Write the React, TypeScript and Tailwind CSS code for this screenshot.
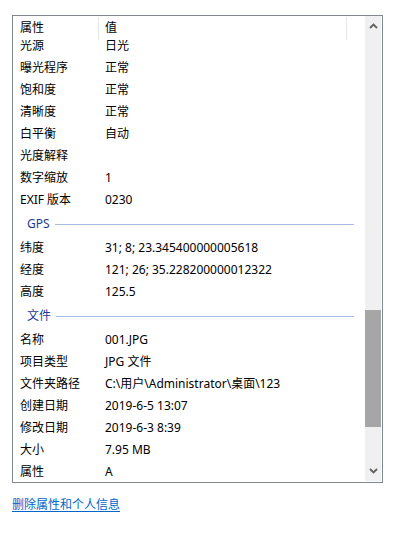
const font = { fontFamily: '"Noto Sans", "Noto Sans CJK SC", sans-serif' }

type Row = { k: string; v?: string } | { group: string }

const rows: Row[] = [
  { k: '光源', v: '日光' },
  { k: '曝光程序', v: '正常' },
  { k: '饱和度', v: '正常' },
  { k: '清晰度', v: '正常' },
  { k: '白平衡', v: '自动' },
  { k: '光度解释', v: '' },
  { k: '数字缩放', v: '1' },
  { k: 'EXIF 版本', v: '0230' },
  { group: 'GPS' },
  { k: '纬度', v: '31; 8; 23.345400000005618' },
  { k: '经度', v: '121; 26; 35.228200000012322' },
  { k: '高度', v: '125.5' },
  { group: '文件' },
  { k: '名称', v: '001.JPG' },
  { k: '项目类型', v: 'JPG 文件' },
  { k: '文件夹路径', v: 'C:\\用户\\Administrator\\桌面\\123' },
  { k: '创建日期', v: '2019-6-5 13:07' },
  { k: '修改日期', v: '2019-6-3 8:39' },
  { k: '大小', v: '7.95 MB' },
  { k: '属性', v: 'A' },
]

function Chevron({ down }: { down?: boolean }) {
  return (
    <svg width="9" height="6" viewBox="0 0 9 6" className={down ? 'rotate-180' : ''}>
      <path d="M1 5 L4.5 1.5 L8 5" fill="none" stroke="#606060" strokeWidth="1.8" />
    </svg>
  )
}

export default function App() {
  return (
    <div className="w-[397px] h-[533px] bg-white pt-[15px] pl-[12px] text-[12px] text-black" style={font}>
      <div className="w-[371px] h-[468px] border border-[#828790] flex">
        <div className="w-[352px] flex flex-col">
          <div className="h-[24px] flex items-center shrink-0 relative z-10 bg-white">
            <span className="w-[85px] pl-[7px]">属性</span>
            <div className="w-px h-[23px] bg-[#e5e5e5]" />
            <span className="w-[247px] pl-[6px]">值</span>
            <div className="w-px h-[23px] bg-[#e5e5e5]" />
          </div>
          <div className="flex-1 overflow-hidden">
            {/* list is scrolled a little, first row sits under the header */}
            <div className="-mt-[5px]">
              {rows.map((r, i) =>
                'group' in r ? (
                  <div key={i} className="h-[26px] flex items-center pl-[14px] pr-[11px] gap-[5px]">
                    <span className="text-[#1e3a8f]">{r.group}</span>
                    <div className="flex-1 h-px bg-[#a7bbe3]" />
                  </div>
                ) : (
                  <div key={i} className="h-[22px] flex items-center">
                    <span className="w-[92px] pl-[7px] whitespace-nowrap">{r.k}</span>
                    <span className="whitespace-nowrap">{r.v}</span>
                  </div>
                )
              )}
            </div>
          </div>
        </div>
        <div className="w-[16px] h-[465px] bg-[#f0f0f0] flex flex-col">
          <div className="h-[20px] flex items-center justify-center">
            <Chevron />
          </div>
          <div className="flex-1 flex flex-col pt-[274px] pb-[34px]">
            <div className="flex-1 bg-[#a6a6a6]" />
          </div>
          <div className="h-[20px] flex items-center justify-center">
            <Chevron down />
          </div>
        </div>
      </div>
      <div className="mt-[13px]">
        <a href="#" className="text-[#0066cc] underline underline-offset-2">删除属性和个人信息</a>
      </div>
    </div>
  )
}
